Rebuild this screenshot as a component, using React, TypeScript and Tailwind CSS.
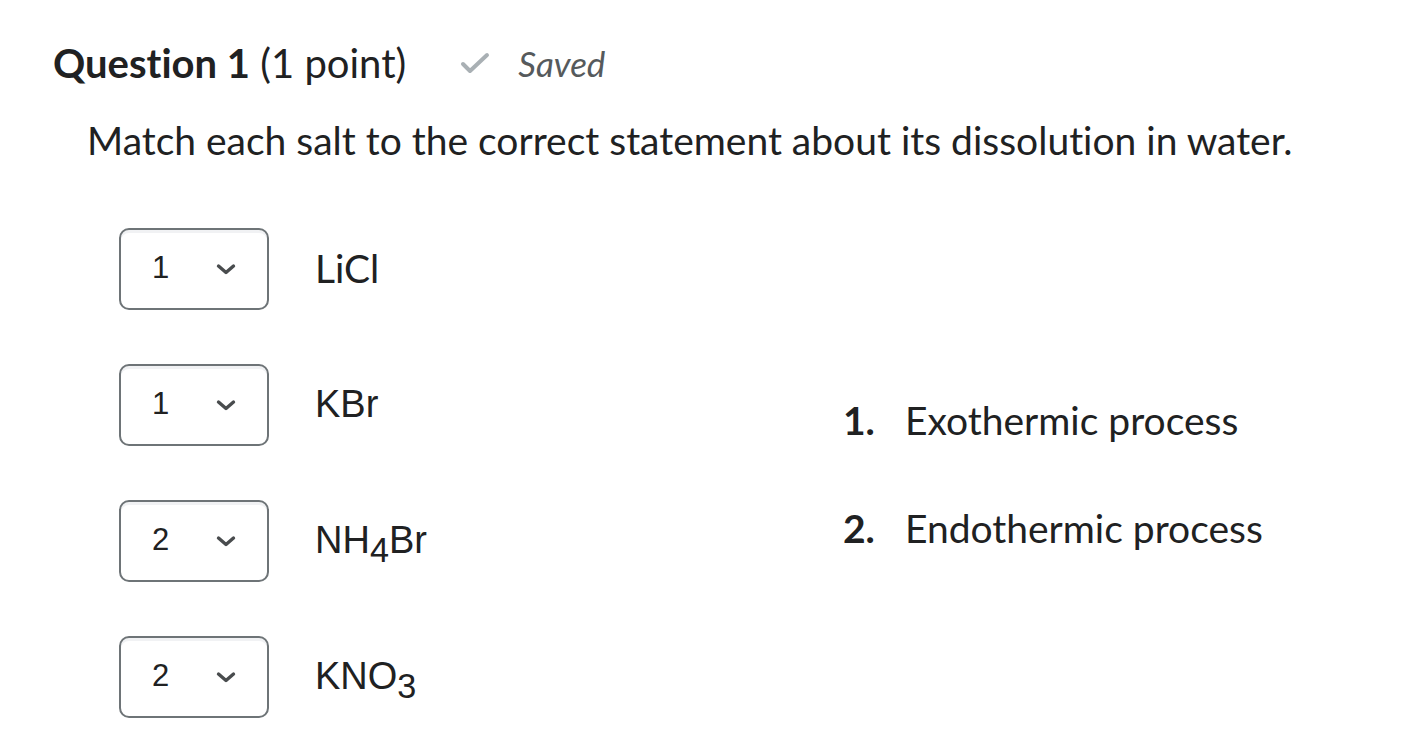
const rows = [
  { value: "1", label: <span className="font-['Lato',sans-serif] text-[39px]">LiCl</span> },
  { value: "1", label: <span className="font-['Liberation_Sans',Arial,sans-serif] text-[38px]">KBr</span> },
  {
    value: "2",
    label: (
      <span className="font-['Liberation_Sans',Arial,sans-serif] text-[38px]">
        NH<sub className="text-[0.9em]">4</sub>Br
      </span>
    ),
  },
  {
    value: "2",
    label: (
      <span className="font-['Liberation_Sans',Arial,sans-serif] text-[38px]">
        KNO<sub className="text-[0.9em]">3</sub>
      </span>
    ),
  },
];

function Chevron() {
  return (
    <svg width="22" height="12" viewBox="0 0 22 12" fill="none">
      <path d="M3.5 3l7.5 6.5L18.5 3" stroke="#494c4e" strokeWidth="3.4" strokeLinecap="round" strokeLinejoin="round" />
    </svg>
  );
}

function Check() {
  return (
    <svg width="32" height="24" viewBox="0 0 32 24" fill="none">
      <path d="M4 13l7 7L28 4" stroke="#a9b0b4" strokeWidth="4" strokeLinecap="round" strokeLinejoin="round" />
    </svg>
  );
}

export default function App() {
  return (
    <main className="min-h-screen bg-white text-[#202122] font-['Lato',sans-serif] [font-variant-ligatures:none]">
      <section className="pl-[53px] pt-[37px]">
        <div className="flex items-center">
          <h1 className="text-[40px] leading-[50px]">
            <span className="font-bold">Question 1</span> (1 point)
          </h1>
          <div className="ml-[53px] flex items-center gap-[27px]">
            <Check />
            <span className="text-[35px] italic text-[#565a5c]">Saved</span>
          </div>
        </div>

        <p className="ml-[34px] mt-[26px] text-[39px] leading-[48px]">
          Match each salt to the correct statement about its dissolution in water.
        </p>

        <div className="mt-[64px] flex items-center">
          <div className="ml-[66px] flex flex-col gap-[54px]">
            {rows.map((row, i) => (
              <div key={i} className="flex items-center">
                <div className="flex h-[82px] w-[150px] items-center justify-between rounded-[10px] border-2 border-[#6e7477] bg-white pl-[31px] pr-[30px] shadow-[inset_0_3px_0_0_#f1f2f4]">
                  <span className="font-['Liberation_Sans',Arial,sans-serif] text-[31px]">{row.value}</span>
                  <Chevron />
                </div>
                <div className="ml-[46px]">{row.label}</div>
              </div>
            ))}
          </div>

          <ol className="ml-[416px] mt-[2px] flex flex-col gap-[60px] text-[39px] leading-[48px]">
            <li className="flex">
              <span className="w-[62px] font-bold">1.</span>
              <span>Exothermic process</span>
            </li>
            <li className="flex">
              <span className="w-[62px] font-bold">2.</span>
              <span>Endothermic process</span>
            </li>
          </ol>
        </div>
      </section>
    </main>
  );
}
